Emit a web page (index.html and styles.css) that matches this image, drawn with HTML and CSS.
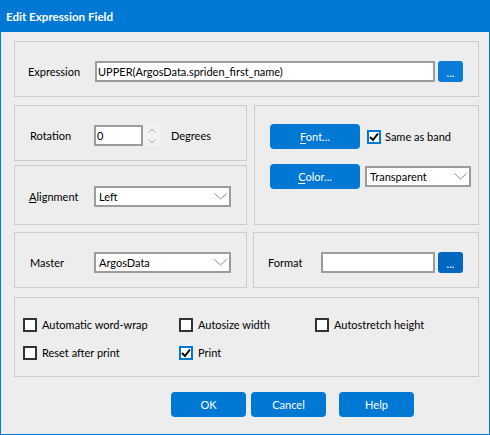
FILE: index.html
```html
<!DOCTYPE html>
<html>
<head>
<meta charset="utf-8">
<title>Edit Expression Field</title>
<link rel="stylesheet" href="styles.css">
</head>
<body>
<div class="window">
  <div class="titlebar">Edit Expression Field</div>
  <div class="content">
    <div class="panel p-expr">
      <span class="label l-expr">Expression</span>
      <div class="field f-expr">UPPER(ArgosData.spriden_first_name)</div>
      <div class="dots">...</div>
    </div>

    <div class="row row2">
      <div class="col-left">
        <div class="panel p-rot">
          <span class="label l-rot">Rotation</span>
          <div class="field f-rot">0</div>
          <div class="spin">
            <svg width="8" height="5" viewBox="0 0 8 5"><polyline points="0.5,4.5 4,1 7.5,4.5" fill="none" stroke="#a8a8a8" stroke-width="1"/></svg>
            <svg width="8" height="5" viewBox="0 0 8 5"><polyline points="0.5,0.5 4,4 7.5,0.5" fill="none" stroke="#a8a8a8" stroke-width="1"/></svg>
          </div>
          <span class="degrees">Degrees</span>
        </div>
        <div class="panel p-align">
          <span class="label l-align"><u>A</u>lignment</span>
          <div class="select s-align">Left
            <svg class="chev" width="13" height="7" viewBox="0 0 13 7"><polyline points="0.5,0.5 6.5,6 12.5,0.5" fill="none" stroke="#8c8c8c" stroke-width="1"/></svg>
          </div>
        </div>
      </div>
      <div class="panel p-font">
        <div class="frow">
          <div class="btn b-font"><u>F</u>ont...</div>
          <div class="check checked"><svg width="10" height="10" viewBox="0 0 10 10"><polyline points="1,5 4,8 9,1.5" fill="none" stroke="#000" stroke-width="2"/></svg></div>
          <span class="clabel">Same as band</span>
        </div>
        <div class="frow frow2">
          <div class="btn b-font"><u>C</u>olor...</div>
          <div class="select s-color">Transparent
            <svg class="chev" width="13" height="7" viewBox="0 0 13 7"><polyline points="0.5,0.5 6.5,6 12.5,0.5" fill="none" stroke="#8c8c8c" stroke-width="1"/></svg>
          </div>
        </div>
      </div>
    </div>

    <div class="row row3">
      <div class="panel p-master">
        <span class="label l-rot">Master</span>
        <div class="select s-align">ArgosData
          <svg class="chev" width="13" height="7" viewBox="0 0 13 7"><polyline points="0.5,0.5 6.5,6 12.5,0.5" fill="none" stroke="#8c8c8c" stroke-width="1"/></svg>
        </div>
      </div>
      <div class="panel p-format">
        <span class="label l-format">Format</span>
        <div class="field f-format"></div>
        <div class="dots dark">...</div>
      </div>
    </div>

    <div class="panel p-checks">
      <div class="citem"><div class="check"></div><span class="clabel">Automatic word-wrap</span></div>
      <div class="citem"><div class="check"></div><span class="clabel">Autosize width</span></div>
      <div class="citem"><div class="check"></div><span class="clabel">Autostretch height</span></div>
      <div class="citem"><div class="check"></div><span class="clabel">Reset after print</span></div>
      <div class="citem"><div class="check checked"><svg width="10" height="10" viewBox="0 0 10 10"><polyline points="1,5 4,8 9,1.5" fill="none" stroke="#000" stroke-width="2"/></svg></div><span class="clabel">Print</span></div>
    </div>

    <div class="buttons">
      <div class="btn b-ok">OK</div>
      <div class="btn b-cancel">Cancel</div>
      <div class="btn b-help">Help</div>
    </div>
  </div>
</div>
</body>
</html>
```

FILE: styles.css
```css
* { box-sizing: border-box; }
html, body { margin: 0; padding: 0; }
body {
  font-family: Lato, "Noto Sans", sans-serif;
  font-size: 11px;
  color: #000;
  background: #ededed;
}
.window {
  width: 490px;
  height: 435px;
  background: #ededed;
  border: 1px solid #0078d4;
  border-top: 0;
  overflow: hidden;
}
.titlebar {
  height: 32px;
  background: #0078d4;
  color: #fff;
  font-weight: bold;
  font-size: 11.6px;
  line-height: 34px;
  padding-left: 6px;
  margin: 0 -1px;
}
.content {
  padding: 9px 10px 0 13px;
}
.panel {
  border: 1px solid #cccccc;
  display: flex;
  align-items: flex-start;
}
.label { line-height: 21px; white-space: nowrap; }
.field, .select {
  background: #fff;
  border: 2px solid #9c9c9c;
  height: 21px;
  line-height: 17px;
  padding-left: 1px;
  white-space: nowrap;
  overflow: hidden;
}
.select { position: relative; padding-left: 3px; }
.chev { position: absolute; right: 2px; top: 5px; }
.dots {
  width: 25px;
  height: 21px;
  margin-left: 3px;
  background: #0a7bd6;
  border-radius: 3px;
  color: #fff;
  text-align: center;
  line-height: 24px;
  font-size: 11px;
}
.dots.dark { background: #0066c0; }
.btn {
  background: #0078d4;
  color: #fff;
  border-radius: 4px;
  height: 25px;
  line-height: 25px;
  text-align: center;
}
.btn u { text-decoration-thickness: 1px; text-underline-offset: 2px; }

.p-expr { height: 56px; padding: 19px 0 0 13px; }
.l-expr { width: 67px; }
.f-expr { width: 340px; }

.row { display: flex; }
.row2 { margin-top: 8px; height: 120px; }
.col-left { width: 233px; display: flex; flex-direction: column; gap: 4px; }
.p-rot { height: 56px; padding: 19px 0 0 15px; }
.l-rot { width: 64px; }
.f-rot { width: 49px; }
.spin {
  width: 17px;
  height: 21px;
  background: #f2f2f2;
  display: flex;
  flex-direction: column;
  align-items: center;
  justify-content: center;
  gap: 6px;
}
.spin svg { display: block; }
.degrees { line-height: 21px; margin-left: 11px; }
.p-align { height: 60px; padding: 20px 0 0 14px; }
.l-align { width: 65px; }
.s-align { width: 137px; }

.p-font {
  width: 225px;
  margin-left: 7px;
  height: 120px;
  flex-direction: column;
  padding: 18px 0 0 15px;
}
.frow { display: flex; align-items: center; }
.frow2 { margin-top: 15px; }
.b-font { width: 90px; }
.p-font .check { margin-left: 7px; }
.s-color { width: 106px; margin-left: 5px; }

.check {
  width: 14px;
  height: 14px;
  border: 2px solid #333;
  background: #fff;
  display: flex;
  align-items: center;
  justify-content: center;
  flex: none;
}
.check.checked { border-color: #0078d4; }
.check svg { display: block; }
.clabel { margin-left: 4px; white-space: nowrap; line-height: 14px; }

.row3 { margin-top: 7px; }
.p-master { width: 233px; height: 56px; padding: 19px 0 0 15px; }
.p-format { width: 226px; margin-left: 6px; height: 56px; padding: 19px 0 0 14px; }
.l-format { width: 53px; }
.f-format { width: 114px; }

.p-checks {
  margin-top: 9px;
  height: 80px;
  display: grid;
  grid-template-columns: 156px 136px auto;
  grid-auto-rows: 14px;
  row-gap: 14px;
  padding: 20px 0 0 8px;
}
.citem { display: flex; align-items: center; }
.citem .clabel { margin-left: 5px; }

.buttons {
  display: flex;
  margin-top: 15px;
  padding-left: 157px;
}
.b-ok, .b-cancel, .b-help { width: 75px; }
.b-cancel { margin-left: 5px; }
.b-help { margin-left: 13px; }
```
